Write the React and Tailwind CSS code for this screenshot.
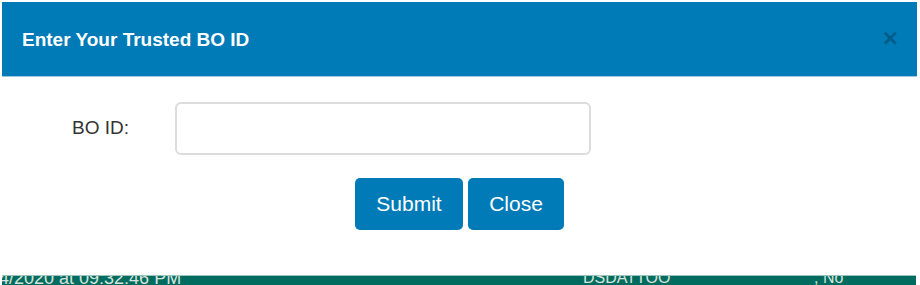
import React from "react";

export default function App() {
  return (
    <div className="w-[920px] h-[285px] bg-white overflow-hidden pt-[2px] pl-[2px] pr-[3px] font-['Liberation_Sans',Arial,sans-serif]">
      {/* Cabecera del modal */}
      <div className="h-[75px] bg-[#007bb7] border-b border-[#9cc7de] flex items-center justify-between pl-[20px] pr-[21px]">
        <h4 className="text-white font-bold text-[19px] leading-none">Enter Your Trusted BO ID</h4>
        <button className="text-black/25 font-bold text-[26px] leading-none -mt-[2px] -mr-[2px]">×</button>
      </div>

      {/* Cuerpo */}
      <div className="h-[198px] flex flex-col">
        <div className="flex items-center mt-[25px]">
          <label className="w-[173px] pl-[70px] text-[#333] text-[19px]">BO ID:</label>
          <input className="w-[416px] h-[53px] border-2 border-[#dcdcdc] rounded-[6px] px-3 outline-none" />
        </div>
        <div className="flex justify-center gap-[5px] mt-[23px]">
          <button className="w-[108px] h-[52px] rounded-[5px] bg-[#007bb7] text-white text-[21px]">Submit</button>
          <button className="w-[96px] h-[52px] rounded-[5px] bg-[#007bb7] text-white text-[21px]">Close</button>
        </div>
      </div>

      {/* Tabla de fondo, recortada */}
      <div className="h-[12px] bg-[#006c5f] border-t border-[#9fc4bd] overflow-hidden relative text-[#d9e3dc] text-[16px] leading-none mr-[1px]">
        <span className="absolute -left-[3px] -top-[7px] text-[18px]">4/2020 at 09:32:46 PM</span>
        <span className="absolute left-[581px] -top-[6px]">DSDATTOO</span>
        <span className="absolute left-[812px] -top-[6px]">, No</span>
      </div>
    </div>
  );
}
